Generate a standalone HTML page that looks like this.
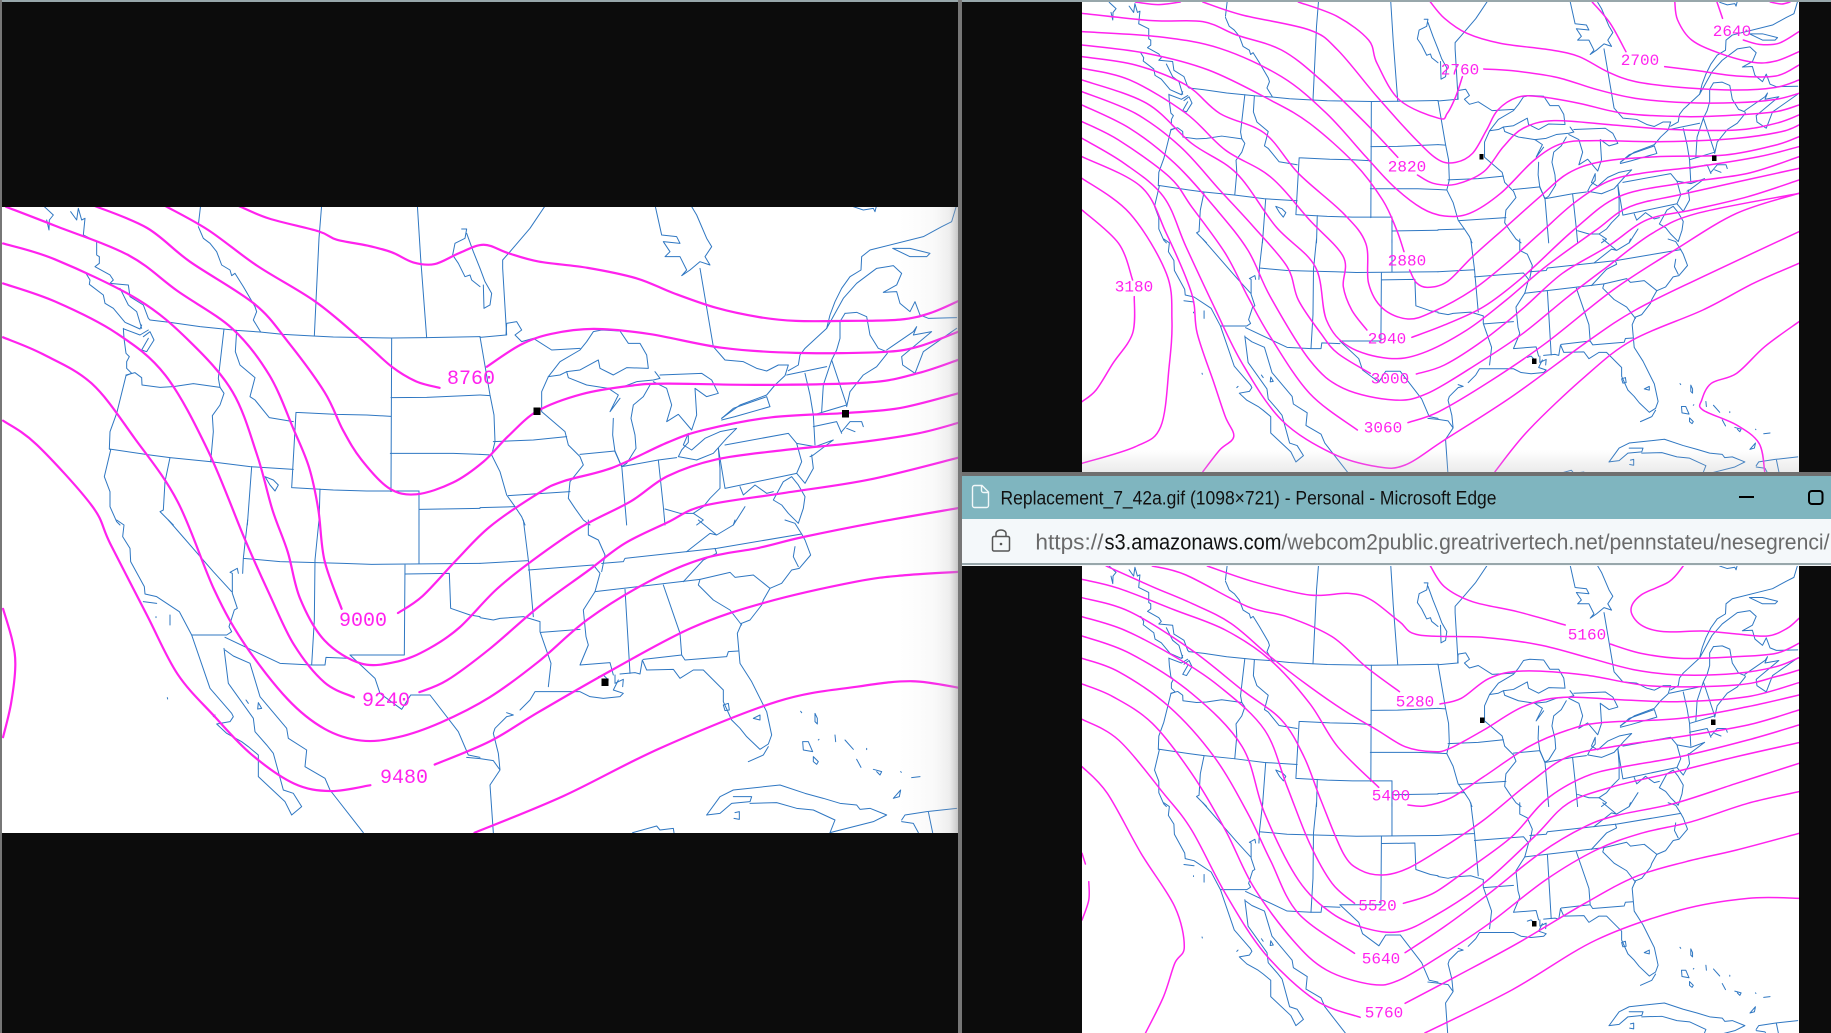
<!DOCTYPE html>
<html><head><meta charset="utf-8"><title>Replacement_7_42a.gif</title>
<style>
html,body{margin:0;padding:0;background:#0c0c0c;width:1831px;height:1033px;overflow:hidden}
svg{display:block}
.b path,.c path{fill:none;vector-effect:non-scaling-stroke;stroke-linejoin:round;stroke-linecap:round}
.b{stroke:#2f77c2;stroke-width:1}
.c{stroke:#ff22ee}
.t{font-family:"Liberation Mono",monospace;fill:#ff22ee;text-anchor:middle}
.u{font-family:"Liberation Sans",sans-serif}
</style></head><body>
<svg width="1831" height="1033" viewBox="0 0 1831 1033" xmlns="http://www.w3.org/2000/svg">
<defs>
<clipPath id="cl"><rect x="2" y="207" width="956" height="626"/></clipPath>
<clipPath id="ct"><rect x="1082" y="2" width="717" height="470"/></clipPath>
<clipPath id="cb"><rect x="1082" y="566" width="717" height="467"/></clipPath>
<linearGradient id="sh" x1="0" x2="1" y1="0" y2="0"><stop offset="0" stop-color="#aaa" stop-opacity="0"/><stop offset=".6" stop-color="#aaa" stop-opacity=".07"/><stop offset=".85" stop-color="#aaa" stop-opacity=".2"/><stop offset="1" stop-color="#999" stop-opacity=".55"/></linearGradient>
<linearGradient id="sv" x1="0" x2="0" y1="0" y2="1"><stop offset="0" stop-color="#bbb" stop-opacity="0"/><stop offset="1" stop-color="#bbb" stop-opacity=".3"/></linearGradient>
</defs>
<rect width="1831" height="1033" fill="#0c0c0c"/>
<rect width="1831" height="2" fill="#98a7ab"/>
<rect x="0" y="0" width="2" height="1033" fill="#777"/>
<rect x="958" y="0" width="4" height="1033" fill="#777"/>

<!-- LEFT PANEL -->
<rect x="2" y="207" width="956" height="626" fill="#fff"/>
<g clip-path="url(#cl)">
<g id="base" class="b">
<g transform="translate(0,205) scale(.33333)">
<path d="M450 345 510 352 600 365 670 372 710 376 780 381 850 388 940 393 1000 396 1175 399 1280 398 1440 395"/>
<path d="M602 0 595 60M965 0 957 100 943 393M1252 0 1262 160 1280 398"/>
<path d="M595 65 610 100 630 115 650 140 665 180 690 195 695 212 705 205 730 245 765 305 770 320 760 345 782 381"/>
<path d="M133 5 160 30 148 45 147 75 140 45M212 20 230 45 235 10 245 45 255 40 250 90 290 110 290 150 298 155 298 175 285 185 330 210 340 225 330 235 385 240 390 275 430 300 445 340 450 345"/>
<path d="M258 205 270 225 268 238 310 270 315 295 340 310 375 352 420 372 425 360M360 250 385 300 410 320 425 370"/>
<path d="M370 370 372 400 378 445 388 455 380 470 380 490 395 505 378 512M430 395 450 380 462 405 440 440 425 435 445 400M372 372 420 390 445 375"/>
<path d="M378 510 405 503 425 518 426 540 480 547 520 545 580 536 660 547"/>
<path d="M672 372 655 520 660 547 672 565 660 600 637 632 640 680 632 770"/>
<path d="M710 376 706 440 720 480 765 518 750 575 765 585 808 638 880 650"/>
<path d="M378 512 350 625 330 680 328 732 332 735 313 815 330 860 330 905 350 950 360 960"/>
<path d="M328 732 450 750 510 758 630 770 750 785 880 793"/>
<path d="M510 758 495 830 490 915 480 920 520 960M755 785 742 960"/>
<path d="M888 622 1010 628 1100 630 1173 634M888 622 875 848 1000 855 1100 858 1257 858M960 852 957 960"/>
<path d="M1175 399 1173 860M1173 578 1280 577 1440 570M1171 745 1360 745 1440 748"/>
<path d="M795 815 820 825 835 840 825 858 810 840Z"/>
<path d="M1385 72 1400 72 1395 100 1365 115 1358 150 1375 175 1395 215 1410 210 1415 225 1440 245M1400 85 1420 140 1440 190"/>
<path d="M1257 858 1257 960M1257 913 1440 910"/>
</g>
<g transform="translate(480,205) scale(.33333)">
<path d="M0 397 78 390 80 355 110 350 125 375 105 390 125 410 160 400 215 435 300 430"/>
<path d="M197 0 150 70 90 140 68 165 68 190 80 390"/>
<path d="M0 190 15 230 35 265 30 300 12 310 10 240"/>
<path d="M0 395 30 570 42 630 45 710 35 750 60 800 80 870 105 905 125 935 135 960M0 570 30 572M0 748 35 750M40 710 160 705 260 695"/>
<path d="M205 515 185 560 185 620 255 680 265 720 300 755 310 780 270 830 265 880 285 910 310 945 330 960"/>
<path d="M205 515 240 470 300 435 320 410 340 380 365 375 420 378 445 415 480 415 500 450 505 490 440 488 400 510 360 490 355 465 300 495 260 500 240 510 205 515"/>
<path d="M260 500 265 518 320 540 385 550 430 545 470 530 520 525 540 520 525 500"/>
<path d="M385 550 415 570 390 620 420 580M400 640 398 690 405 740 425 785 440 775 468 730 465 690 453 640 460 600 490 575 510 540"/>
<path d="M520 530 560 550 575 600 560 650 595 628 635 675 650 630 645 550 680 575 715 565 695 525 665 505 540 510"/>
<path d="M595 755 605 735 625 712 625 685 610 720 635 735 675 700 720 680 770 670 740 700 700 745 650 765 595 755"/>
<path d="M725 640 760 610 860 575 870 605 765 635 725 645"/>
<path d="M725 640 780 600 860 570 885 540 915 512 925 480 895 480 860 498 830 490 790 470 735 465 700 425 660 190"/>
<path d="M525 0 545 90 590 95 600 115 550 110 570 140 555 155 600 155 620 195 605 212 630 195 660 170 690 180 675 155 695 125 680 100 650 30 635 5"/>
<path d="M1120 5 1150 15 1180 10 1185 20 1190 0"/>
<path d="M1430 0 1415 50 1385 65 1330 95 1170 135 1145 155 1143 195 1110 215 1085 250 1065 290 1050 330 1040 370 1090 280 1130 235 1190 190 1240 182 1265 205 1250 240 1210 262 1250 260 1260 295 1290 320 1305 290 1320 330 1345 340 1430 338"/>
<path d="M1238 130 1290 130 1350 145 1340 155 1290 155Z"/>
<path d="M1040 370 975 430 960 450 955 480 925 497"/>
<path d="M1095 325 1130 322 1160 335 1170 390 1195 430 1220 440 1222 445 1190 485 1150 510 1110 560 1100 605"/>
<path d="M1055 465 1100 600M1095 325 1080 350 1080 400 1070 435 1055 465 1030 540 1025 620"/>
<path d="M1220 435 1300 380 1310 365 1300 390 1355 380 1265 455 1268 480 1305 505 1330 440 1430 370"/>
<path d="M920 510 1040 485M975 505 990 570 1000 630 1005 720M1000 630 1100 600M1000 665 1070 650 1085 685"/>
<path d="M1085 680 1110 650 1145 650 1150 665M1100 670 1125 680"/>
<path d="M735 720 925 685 950 715 1005 725 1060 705 1000 750 990 755M715 730 735 850 950 805M950 715 965 770 950 805 975 835 1000 790 995 750"/>
<path d="M780 845 790 870 825 840 860 865 880 860M935 815 955 840 975 875 970 910 955 955 925 925 905 900 880 885 910 830 935 815"/>
<path d="M715 730 720 790 720 850 690 880 670 905 640 925 670 945 650 960M795 905 760 960"/>
<path d="M535 765 550 905 555 960M425 780 440 960M300 748 405 738 425 785 535 765 590 758M85 872 270 860M0 908 105 905M555 912 600 925 640 925"/>
</g>
<g transform="translate(0,520) scale(.33333)">
<path d="M350 0 372 15 368 50 390 85 392 125 433 200 435 222 470 230 538 275 575 345 630 505 695 580 700 590 690 605 650 612 680 640 725 665 745 680 775 705 775 770 855 845 875 885 905 860 880 820 850 810 820 700 800 675 765 635 760 595 685 490 672 385"/>
<path d="M675 390 700 408 750 430 780 530 860 625 865 655 920 690 915 740 975 775 990 810 1090 938"/>
<path d="M575 345 680 345 695 335 687 320 703 270 712 265 697 220 697 160 690 157 712 145 715 160"/>
<path d="M675 352 840 430 935 435 975 435 978 412 1050 415"/>
<path d="M743 0 735 70 730 115 840 125 950 128 1030 130 1115 133 1440 130M730 115 728 160M957 0 945 120 943 300 935 435M1257 0 1257 130"/>
<path d="M1215 135 1213 405 1050 405M1215 162 1348 160 1352 265 1410 285 1440 290"/>
<path d="M1050 405 1125 475 1140 520 1205 568 1232 525 1290 525 1375 635 1405 705 1440 712"/>
<path d="M505 0 640 155 695 215M430 245 470 250M468 290 468 293M510 285 510 315M502 533 503 537M640 590 645 585M738 540 745 550M775 548 785 565 773 567Z"/>
</g>
<g transform="translate(480,520) scale(.33333)">
<path d="M-40 712 0 716 40 722 60 750 30 795 40 938M45 625 80 590 100 585 80 578M45 625 40 640 55 700 60 750"/>
<path d="M120 570 150 540 165 515 195 515 300 515 330 530 370 535 420 530 430 520 400 510 415 480"/>
<path d="M205 500 213 430 180 335 180 305 130 290 60 295 40 300 0 293M183 337 300 328"/>
<path d="M345 215 310 270 318 350 325 375 300 435 390 428 400 465"/>
<path d="M130 0 145 120 160 290M0 130 145 122M145 150 340 135 360 160 345 215"/>
<path d="M325 0 325 45 355 60 375 105 365 155M365 130 430 125 435 115 620 95 710 85 965 42"/>
<path d="M345 215 660 178M435 208 450 460M550 195 600 340 605 405 615 420 740 410 745 395 775 393M490 418 605 405"/>
<path d="M420 462 465 458 480 462 487 420 500 450 580 448 600 475 640 450 670 450 730 510 730 545 755 600 780 625 800 650 840 688 865 672 875 645 860 575 815 485 780 430 772 340 785 310"/>
<path d="M660 178 655 195 700 240 750 270 785 315M660 178 750 157 765 172 820 165 870 205 850 240 845 255 810 300 785 310"/>
<path d="M870 205 905 190 935 150 958 145 992 105 975 60 965 42 945 10 915 0M945 80 940 110 955 140"/>
<path d="M620 95 690 40 710 45 760 15 765 0M655 0 710 45M705 85 710 100 670 120 610 185"/>
<path d="M805 725 850 705 865 680M820 595 840 585 840 600ZM730 555 745 550 748 570 735 572Z"/>
<path d="M1005 580 1012 595 1012 612 1005 605ZM968 665 985 665 998 695 970 690ZM1000 710 1015 725 1010 733 1000 725ZM1065 645 1067 665M1095 660 1120 688M1130 718 1143 742M1180 748 1205 755 1200 765 1190 755M1295 773 1320 770M1240 835 1262 810 1258 830ZM1160 685 1160 689M1262 755 1264 757M1015 660 1017 658M965 578 962 574"/>
<path d="M680 885 720 830 760 810 900 795 975 820 1030 835 1080 850 1130 855 1140 868 1170 865 1220 885 1180 905 1050 938"/>
<path d="M680 885 720 880 755 850 810 845 815 830 760 830M810 850 890 848 950 865 1000 870 1065 900 1050 938M765 878 778 875 778 898 762 895"/>
<path d="M1265 900 1275 885 1340 875 1430 865M1265 905 1300 910 1315 938M1345 875 1358 938M458 938 530 918 540 930 580 925 582 938"/>
<path d="M355 470 370 465 385 480M405 465 405 490 430 478 428 500"/>
</g>
</g>
<g class="c" stroke-width="2.2" transform="translate(0,190) scale(.61224,.42092)">
<path d="M390 38 440 68 520 98 550 118 600 132 640 148 675 172 710 176 750 150 790 130 830 150 880 170 960 185 1040 210 1100 245 1170 280 1240 302 1300 311 1380 311 1470 308 1520 292 1568 262"/>
<path d="M270 38 340 95 420 180 515 265 590 355 640 420 680 455 718 470"/>
<path d="M795 420 850 368 900 342 970 330 1060 342 1180 375 1300 387 1440 385 1500 372 1568 335"/>
<path d="M155 38 240 90 310 170 415 270 470 360 530 480 560 570 590 640 635 708 680 723 740 695 790 645 830 585 878 525 950 485 1030 465 1090 460 1250 463 1420 457 1500 435 1568 402"/>
<path d="M10 40 90 85 210 155 290 240 380 330 440 440 480 570 505 660 520 760 530 880 558 995"/>
<path d="M650 1005 690 965 745 880 800 800 880 720 920 692 1000 660 1090 600 1150 570 1260 540 1380 530 1470 518 1568 482"/>
<path d="M5 127 90 165 225 260 310 360 380 480 420 630 445 760 470 860 490 970 530 1070 590 1125 650 1120 700 1090 750 1040 810 950 870 880 950 800 1030 740 1090 680 1170 640 1280 618 1400 600 1500 578 1568 552"/>
<path d="M5 222 90 265 190 340 270 440 340 620 400 830 440 960 480 1080 530 1170 578 1205"/>
<path d="M685 1193 730 1165 800 1090 880 990 960 905 1020 840 1090 790 1150 750 1280 720 1420 688 1568 635"/>
<path d="M5 350 70 390 150 460 220 590 290 740 350 950 400 1080 470 1210 530 1280 590 1308 650 1300 720 1265 800 1205 880 1120 960 1020 1060 930 1150 875 1240 850 1310 825 1430 790 1568 755"/>
<path d="M5 548 60 605 150 750 180 840 240 1010 290 1150 350 1250 410 1340 480 1410 540 1428 605 1414"/>
<path d="M710 1365 800 1310 880 1240 1000 1140 1130 1040 1250 980 1400 930 1480 915 1568 907"/>
<path d="M775 1527 920 1440 1080 1325 1270 1215 1400 1180 1490 1167 1568 1183"/>
<path d="M5 995 20 1070 25 1130 18 1220 5 1300"/>
</g>
<g class="t" font-size="20">
<text x="471" y="384">8760</text><text x="363" y="626">9000</text><text x="386" y="706">9240</text><text x="404" y="783">9480</text>
</g>
<g fill="#000"><rect x="533.5" y="407.5" width="7" height="7.5"/><rect x="842" y="410" width="7" height="7.5"/><rect x="601.5" y="678.5" width="7" height="7.5"/></g>
<rect x="900" y="207" width="58" height="626" fill="url(#sh)"/>
</g>

<!-- TOP RIGHT -->
<rect x="1082" y="2" width="717" height="470" fill="#fff"/>
<g clip-path="url(#ct)">
<use href="#base" transform="translate(1075.8,-153.8) scale(.7546,.7555)"/>
<g class="c" stroke-width="1.5" transform="translate(950,0) scale(.56186,.33333)">
<path d="M855 6 880 55 920 100 980 130 1070 150 1120 170 1170 215 1220 245 1300 262 1400 270 1470 262 1511 240"/>
<path d="M1143 6 1175 70 1203 155M1272 200 1330 212 1400 228 1470 228 1511 195"/>
<path d="M1290 6 1295 60 1320 120 1370 160 1430 187 1470 183 1511 155M1365 6 1375 55M1412 120 1440 133 1475 130 1511 95M1460 6 1480 12 1495 6"/>
<path d="M950 207 1000 212 1080 232 1150 268 1220 295 1310 308 1400 308 1470 298 1511 280"/>
<path d="M620 6 690 50 745 120 760 190 800 300 870 355 885 340 900 290 912 230"/>
<path d="M450 6 520 45 640 90 690 150 760 290 830 420 870 480 900 487 930 460 955 390 975 330 1010 292 1050 290 1120 310 1200 340 1310 350 1400 345 1470 335 1511 315"/>
<path d="M330 6 370 14 410 6M235 40 360 62 450 65 510 105 590 150 660 240 740 370 797 472"/>
<path d="M832 525 860 550 900 553 950 515 985 440 1020 385 1075 362 1180 375 1280 388 1400 390 1470 370 1511 345"/>
<path d="M235 95 370 110 480 145 590 230 670 340 740 470 790 560 840 625 880 648 925 640 980 580 1040 480 1090 430 1150 422 1270 425 1400 415 1480 395 1511 375"/>
<path d="M235 135 350 160 460 210 570 300 640 370 720 490 770 600 795 690 808 755"/>
<path d="M818 810 830 848 850 862 885 845 930 770 990 680 1050 590 1100 520 1160 485 1260 470 1380 465 1470 435 1511 410"/>
<path d="M235 170 330 195 420 255 480 340 560 400 620 520 700 640 740 730 745 850 770 925 815 957 860 935 930 870 990 790 1050 700 1110 610 1170 545 1230 520 1330 500 1440 470 1511 440"/>
<path d="M235 205 320 240 420 340 490 450 570 530 640 660 700 770 700 860 715 930 742 990"/>
<path d="M822 1012 880 975 950 920 1020 830 1110 690 1190 590 1300 550 1420 520 1511 470"/>
<path d="M235 240 350 310 430 430 510 520 580 680 650 800 670 960 710 1040 780 1075 840 1060 920 990 990 900 1060 800 1150 690 1210 620 1310 580 1511 505"/>
<path d="M235 275 330 340 410 440 480 570 540 680 600 800 620 900 660 1000 690 1060 748 1120"/>
<path d="M830 1122 880 1095 950 1020 1020 925 1090 820 1170 740 1240 660 1320 630 1420 590 1511 540"/>
<path d="M235 315 320 385 400 490 470 620 530 750 570 890 640 1080 700 1165 790 1200 850 1180 940 1090 1020 1000 1100 890 1170 800 1250 700 1330 640 1511 580"/>
<path d="M235 365 300 420 390 530 430 620 490 760 530 890 570 1010 640 1180 725 1290"/>
<path d="M815 1268 870 1235 960 1145 1060 1030 1180 870 1290 750 1400 640 1511 580"/>
<path d="M235 415 310 490 380 590 420 740 470 920 520 1090 590 1260 680 1360 760 1400 810 1395 880 1320 1000 1190 1130 1030 1220 930 1340 830 1511 695"/>
<path d="M235 470 340 560 385 700 430 880 440 1000 470 1150 490 1250 505 1310 480 1350 450 1415"/>
<path d="M235 535 320 640 385 820 395 960 390 1100 375 1280 330 1340 235 1390"/>
<path d="M235 630 300 730 325 840M328 890 325 1000 290 1090 260 1170 235 1205"/>
<path d="M970 1415 1030 1290 1130 1130 1215 1020 1340 930 1430 850 1511 790"/>
<path d="M1511 965 1450 1040 1400 1120 1355 1150 1338 1200 1340 1230 1400 1275 1440 1330 1450 1415"/>
</g>
<g class="t" font-size="16">
<text x="1732" y="36">2640</text><text x="1640" y="65">2700</text><text x="1460" y="74.500">2760</text><text x="1407" y="171.500">2820</text><text x="1407" y="265.500">2880</text><text x="1387" y="343.500">2940</text><text x="1390" y="383.500">3000</text><text x="1383" y="432.500">3060</text><text x="1134" y="291.500">3180</text>
</g>
<g fill="#000"><rect x="1479.500" y="154" width="4" height="5.500"/><rect x="1712" y="155.500" width="4.500" height="5.500"/><rect x="1532" y="358.500" width="4.500" height="5.500"/></g>
<rect x="1082" y="450" width="717" height="22" fill="url(#sv)"/>
</g>

<!-- BOTTOM RIGHT -->
<rect x="1082" y="566" width="717" height="467" fill="#fff"/>
<g clip-path="url(#cb)">
<use href="#base" transform="translate(1075.8,409.9) scale(.7546,.7555)"/>
<g class="c" stroke-width="1.5" transform="translate(950,560) scale(.56186,.33333)">
<path d="M855 18 880 80 930 125 1010 155 1095 195M1175 252 1230 280 1300 295 1400 290 1470 280 1511 250"/>
<path d="M1305 18 1280 65 1230 105 1212 150 1230 195 1270 215 1340 213 1400 222 1455 228 1490 205 1511 175"/>
<path d="M458 18 540 65 640 105 710 100 750 120 800 185 835 225 950 232 1050 255 1140 295 1220 330 1300 345 1400 340 1470 320 1511 293"/>
<path d="M360 18 420 45 530 140 600 170 680 230 740 320 800 395M872 432 910 415 960 355 1020 333 1130 345 1250 378 1400 375 1470 350 1511 330"/>
<path d="M278 18 360 80 430 130 500 190 570 290 640 380 700 450 760 510 810 560 860 575 890 565 950 510 1020 440 1090 412 1200 420 1300 425 1420 410 1511 368"/>
<path d="M235 58 300 85 400 150 490 210 570 300 640 430 690 560 763 682M815 735 845 738 890 715 950 650 1030 560 1100 510 1160 488 1300 475 1420 440 1511 405"/>
<path d="M235 113 320 155 430 270 520 390 590 480 630 590 660 720 700 880 730 930 770 945 815 925 880 860 950 780 1030 670 1100 590 1180 560 1300 530 1420 495 1511 450"/>
<path d="M235 170 310 210 400 290 480 380 560 510 600 680 640 850 680 970 720 1030M807 1030 860 1000 920 930 1000 830 1060 720 1130 650 1200 620 1300 590 1420 540 1511 495"/>
<path d="M235 228 320 280 430 400 520 560 560 760 620 960 680 1060 740 1105 800 1115 860 1070 950 970 1040 830 1100 730 1180 680 1280 640 1400 590 1511 548"/>
<path d="M235 295 300 335 390 440 470 590 530 760 570 900 620 1060 720 1180M810 1178 880 1100 960 1000 1050 880 1130 800 1190 765 1290 730 1400 670 1511 610"/>
<path d="M235 372 290 410 360 490 430 640 490 810 540 980 610 1140 670 1230 750 1273 800 1260 880 1180 960 1090 1060 960 1150 870 1230 820 1320 785 1420 730 1511 695"/>
<path d="M235 478 300 540 380 700 430 810 490 1000 560 1180 650 1320 730 1372M810 1330 900 1250 1010 1150 1130 1030 1220 950 1310 905 1400 870 1511 820"/>
<path d="M235 620 280 700 340 880 400 1040 417 1160 400 1210 380 1310 348 1419"/>
<path d="M845 1419 1000 1290 1150 1140 1300 1050 1420 1015 1511 1015"/>
<path d="M235 880 241 912M247 965 247 1020 235 1080"/>
</g>
<g class="t" font-size="16">
<text x="1587" y="639.500">5160</text><text x="1415" y="706.500">5280</text><text x="1391" y="800.500">5400</text><text x="1377.500" y="910.500">5520</text><text x="1381" y="963.500">5640</text><text x="1384" y="1017.500">5760</text>
</g>
<g fill="#000"><rect x="1480" y="717.500" width="4.500" height="5.500"/><rect x="1711" y="719.500" width="4.500" height="5.500"/><rect x="1532" y="921" width="4.500" height="5.500"/></g>
</g>

<!-- WINDOW -->
<rect x="962" y="472" width="869" height="4" fill="#6f6f6f"/>
<rect x="962" y="476" width="869" height="43" fill="#7fb5bf"/>
<rect x="962" y="519" width="869" height="44" fill="#f4f8fa"/>
<rect x="962" y="563" width="869" height="2" fill="#98a7ab"/>
<rect x="962" y="565" width="869" height="1" fill="#f4f8fa"/>
<path d="M974.500 485.500H982L988.500 492V505.500A2 2 0 0 1 986.500 507.500H974.500A2 2 0 0 1 972.500 505.500V487.500A2 2 0 0 1 974.500 485.500ZM981.500 485.500V490.500A2 2 0 0 0 983.500 492.500H988.500" fill="none" stroke="#f2f8f9" stroke-width="1.400"/>
<text class="u" x="1000.500" y="504.500" font-size="19" fill="#111" textLength="496" lengthAdjust="spacingAndGlyphs">Replacement_7_42a.gif (1098×721) - Personal - Microsoft Edge</text>
<rect x="1739" y="496" width="15" height="2" fill="#000"/>
<rect x="1809" y="491" width="13.500" height="13" rx="3" fill="none" stroke="#000" stroke-width="2"/>
<path d="M994 536.500H1008A1.500 1.500 0 0 1 1009.500 538V549.500A1.500 1.500 0 0 1 1008 551H994A1.500 1.500 0 0 1 992.500 549.500V538A1.500 1.500 0 0 1 994 536.500ZM996 536.500V533.500A5 3.500 0 0 1 1006 533.500V536.500" fill="none" stroke="#555" stroke-width="1.500"/>
<circle cx="1001" cy="544" r="1.300" fill="#555"/>
<text class="u" x="1035.400" y="549.500" font-size="22" fill="#6a6a6a" textLength="68" lengthAdjust="spacingAndGlyphs">https://</text>
<text class="u" x="1104.500" y="549.500" font-size="22" fill="#111" textLength="177" lengthAdjust="spacingAndGlyphs">s3.amazonaws.com</text>
<text class="u" x="1281.500" y="549.500" font-size="22" fill="#6a6a6a" textLength="548" lengthAdjust="spacingAndGlyphs">/webcom2public.greatrivertech.net/pennstateu/nesegrenci/</text>
</svg>
<script>
document.querySelectorAll('.c path').forEach(function(p){
  var out='';
  p.getAttribute('d').split('M').forEach(function(s){
    var n=s.trim().split(/\s+/).map(Number);
    if(n.length<4)return;
    var P=[],i;
    for(i=0;i+1<n.length;i+=2)P.push([n[i],n[i+1]]);
    out+='M'+P[0][0]+' '+P[0][1];
    for(i=0;i<P.length-1;i++){
      var a=P[Math.max(i-1,0)],b=P[i],c=P[i+1],d=P[Math.min(i+2,P.length-1)];
      out+='C'+(b[0]+(c[0]-a[0])/6)+' '+(b[1]+(c[1]-a[1])/6)+' '+(c[0]-(d[0]-b[0])/6)+' '+(c[1]-(d[1]-b[1])/6)+' '+c[0]+' '+c[1];
    }
  });
  p.setAttribute('d',out);
});
</script>
</body></html>
